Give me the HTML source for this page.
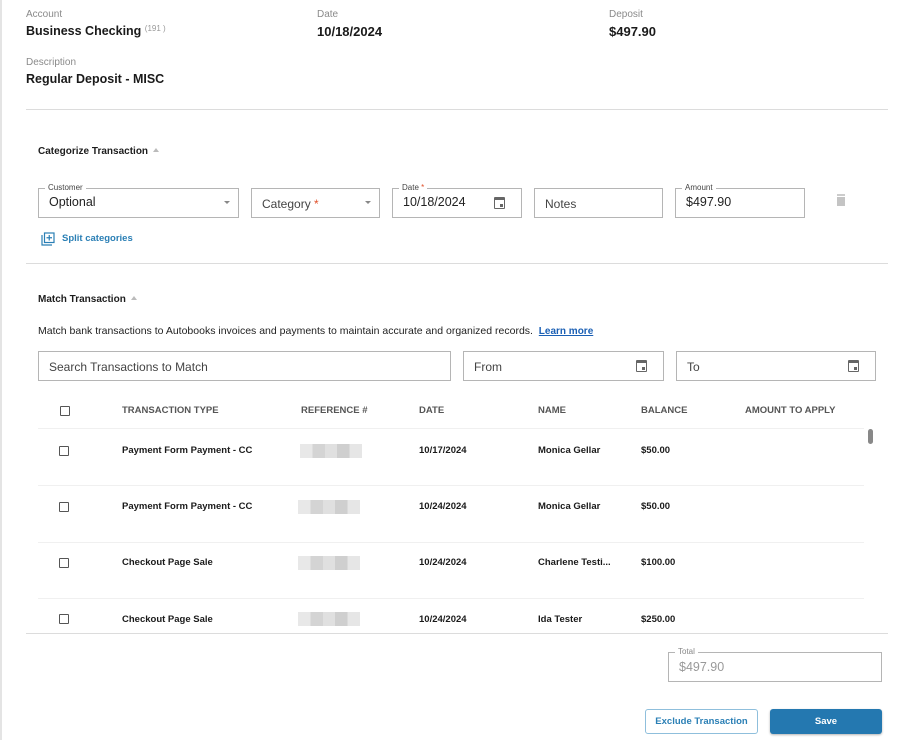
<!DOCTYPE html>
<html><head><meta charset="utf-8"><style>
*{box-sizing:border-box;margin:0;padding:0}
body{width:898px;height:740px;overflow:hidden;background:#fff;font-family:"Liberation Sans",Arial,sans-serif;color:#1d1d1d;position:relative}
.a{position:absolute;white-space:nowrap}
.lbl{font-size:10px;color:#8a8a8a}
.val{font-size:12.5px;font-weight:bold;color:#1a1a1a}
.hr{position:absolute;height:1px;background:#dcdcdc}
.box{position:absolute;border:1px solid #b5b5b5;height:30px}
.fl{position:absolute;top:-6px;left:6px;background:#fff;padding:0 3px;font-size:8px;color:#444}
.ph{position:absolute;left:10px;top:8px;font-size:12px;color:#444}
.th{font-size:9.5px;font-weight:bold;color:#555;top:405px}
.td{font-size:9.5px;font-weight:bold;color:#1a1a1a}
.cb{position:absolute;width:10px;height:10px;border:1.3px solid #555;border-radius:1px}
.blur{position:absolute;width:62px;height:14px;background:linear-gradient(90deg,#e8e8e8 0 20%,#d4d4d4 20% 40%,#e0e0e0 40% 60%,#cfcfcf 60% 80%,#e6e6e6 80%)}
.caret{display:inline-block;width:0;height:0;border-left:3.5px solid transparent;border-right:3.5px solid transparent;border-bottom:4px solid #bbb;margin-left:5px;vertical-align:2px}
.dd{position:absolute;right:8px;top:12px;width:0;height:0;border-left:3.5px solid transparent;border-right:3.5px solid transparent;border-top:3.5px solid #888}
.cal{position:absolute;top:8px;width:11px;height:12px;border:1.5px solid #666;border-top-width:3px;border-radius:1px}
.cal:after{content:"";position:absolute;right:1px;bottom:1px;width:3px;height:3px;background:#666}
</style></head><body>
<div style="position:absolute;left:0;top:0;width:2px;height:740px;background:#e4e4e4"></div>

<div class="a lbl" style="left:26px;top:9px">Account</div>
<div class="a val" style="left:26px;top:24px">Business Checking <span style="font-size:8px;color:#999;font-weight:normal;vertical-align:4px">(191 )</span></div>
<div class="a lbl" style="left:317px;top:9px">Date</div>
<div class="a val" style="left:317px;top:24px;font-size:13px">10/18/2024</div>
<div class="a lbl" style="left:609px;top:9px">Deposit</div>
<div class="a val" style="left:609px;top:24px;font-size:13px">$497.90</div>
<div class="a lbl" style="left:26px;top:57px">Description</div>
<div class="a val" style="left:26px;top:72px">Regular Deposit - MISC</div>
<div class="hr" style="left:26px;width:862px;top:109px"></div>

<div class="a" style="left:38px;top:146px;font-size:10px;font-weight:bold">Categorize Transaction<span class="caret"></span></div>

<div class="box" style="left:38px;top:188px;width:201px"><span class="fl">Customer</span><span class="ph" style="top:6px;font-size:12.5px;color:#222">Optional</span><span class="dd"></span></div>
<div class="box" style="left:251px;top:188px;width:129px"><span class="ph" style="color:#444">Category <span style="color:#e0502a">*</span></span><span class="dd"></span></div>
<div class="box" style="left:392px;top:188px;width:130px"><span class="fl">Date <span style="color:#e0502a">*</span></span><span class="ph" style="top:6px;font-size:12.5px;color:#222">10/18/2024</span><span class="cal" style="left:101px"></span></div>
<div class="box" style="left:534px;top:188px;width:129px"><span class="ph" style="color:#444">Notes</span></div>
<div class="box" style="left:675px;top:188px;width:130px"><span class="fl">Amount</span><span class="ph" style="top:6px;font-size:12.5px;color:#222">$497.90</span></div>
<div style="position:absolute;left:837px;top:194px;width:8px;height:2px;background:#ccc"></div>
<div style="position:absolute;left:837px;top:197px;width:8px;height:9px;background:#c4c4c4"></div>

<svg class="a" style="left:41px;top:232px" width="14" height="14" viewBox="0 0 14 14"><path d="M1 3v10h10" fill="none" stroke="#2a7fb5" stroke-width="1.2"/><rect x="3.5" y="1" width="9.5" height="9.5" fill="none" stroke="#2a7fb5" stroke-width="1.2"/><path d="M8.25 3v5.5M5.5 5.75h5.5" stroke="#2a7fb5" stroke-width="1.2"/></svg>
<div class="a" style="left:62px;top:233px;font-size:9.5px;color:#2a7fb5;font-weight:bold">Split categories</div>
<div class="hr" style="left:26px;width:862px;top:263px"></div>

<div class="a" style="left:38px;top:294px;font-size:10px;font-weight:bold">Match Transaction<span class="caret"></span></div>
<div class="a" style="left:38px;top:325px;font-size:10.5px;color:#222">Match bank transactions to Autobooks invoices and payments to maintain accurate and organized records.&nbsp; <span style="color:#1a5fb4;font-weight:bold;text-decoration:underline;font-size:10px">Learn more</span></div>

<div class="box" style="left:38px;top:351px;width:413px"><span class="ph" style="top:8px">Search Transactions to Match</span></div>
<div class="box" style="left:463px;top:351px;width:201px"><span class="ph" style="top:8px">From</span><span class="cal" style="left:172px"></span></div>
<div class="box" style="left:676px;top:351px;width:200px"><span class="ph" style="top:8px">To</span><span class="cal" style="left:171px"></span></div>

<div class="cb" style="left:60px;top:406px"></div>
<div class="a th" style="left:122px">TRANSACTION TYPE</div>
<div class="a th" style="left:301px">REFERENCE #</div>
<div class="a th" style="left:419px">DATE</div>
<div class="a th" style="left:538px">NAME</div>
<div class="a th" style="left:641px">BALANCE</div>
<div class="a th" style="left:745px">AMOUNT TO APPLY</div>
<div class="hr" style="left:38px;width:826px;top:428px;background:#f0f0f0"></div>
<div style="position:absolute;left:868px;top:429px;width:5px;height:15px;border-radius:3px;background:#888"></div>

<div class="cb" style="left:59px;top:446px"></div>
<div class="a td" style="left:122px;top:445px">Payment Form Payment - CC</div>
<div class="blur" style="left:300px;top:444px"></div>
<div class="a td" style="left:419px;top:445px">10/17/2024</div>
<div class="a td" style="left:538px;top:445px">Monica Gellar</div>
<div class="a td" style="left:641px;top:445px">$50.00</div>
<div class="hr" style="left:38px;width:826px;top:485px;background:#f0f0f0"></div>

<div class="cb" style="left:59px;top:502px"></div>
<div class="a td" style="left:122px;top:501px">Payment Form Payment - CC</div>
<div class="blur" style="left:298px;top:500px"></div>
<div class="a td" style="left:419px;top:501px">10/24/2024</div>
<div class="a td" style="left:538px;top:501px">Monica Gellar</div>
<div class="a td" style="left:641px;top:501px">$50.00</div>
<div class="hr" style="left:38px;width:826px;top:542px;background:#f0f0f0"></div>

<div class="cb" style="left:59px;top:558px"></div>
<div class="a td" style="left:122px;top:557px">Checkout Page Sale</div>
<div class="blur" style="left:298px;top:556px"></div>
<div class="a td" style="left:419px;top:557px">10/24/2024</div>
<div class="a td" style="left:538px;top:557px">Charlene Testi...</div>
<div class="a td" style="left:641px;top:557px">$100.00</div>
<div class="hr" style="left:38px;width:826px;top:598px;background:#f0f0f0"></div>

<div style="position:absolute;left:0;top:608px;width:898px;height:18px;overflow:hidden">
<div class="cb" style="left:59px;top:6px"></div>
<div class="a td" style="left:122px;top:6px">Checkout Page Sale</div>
<div class="blur" style="left:298px;top:4px"></div>
<div class="a td" style="left:419px;top:6px">10/24/2024</div>
<div class="a td" style="left:538px;top:6px">Ida Tester</div>
<div class="a td" style="left:641px;top:6px">$250.00</div>
</div>
<div class="hr" style="left:26px;width:862px;top:633px"></div>

<div class="box" style="left:668px;top:652px;width:214px;height:30px"><span class="fl" style="color:#888">Total</span><span class="ph" style="top:7px;font-size:12.5px;color:#999">$497.90</span></div>

<div style="position:absolute;left:645px;top:709px;width:113px;height:25px;border:1px solid #8fbfdc;border-radius:3px;font-size:9.5px;font-weight:bold;color:#2a7fb5;text-align:center;line-height:23px">Exclude Transaction</div>
<div style="position:absolute;left:770px;top:709px;width:112px;height:25px;background:#2478b0;border-radius:3px;font-size:9.5px;font-weight:bold;color:#fff;text-align:center;line-height:25px;box-shadow:0 1px 2px rgba(0,0,0,.3)">Save</div>
</body></html>
